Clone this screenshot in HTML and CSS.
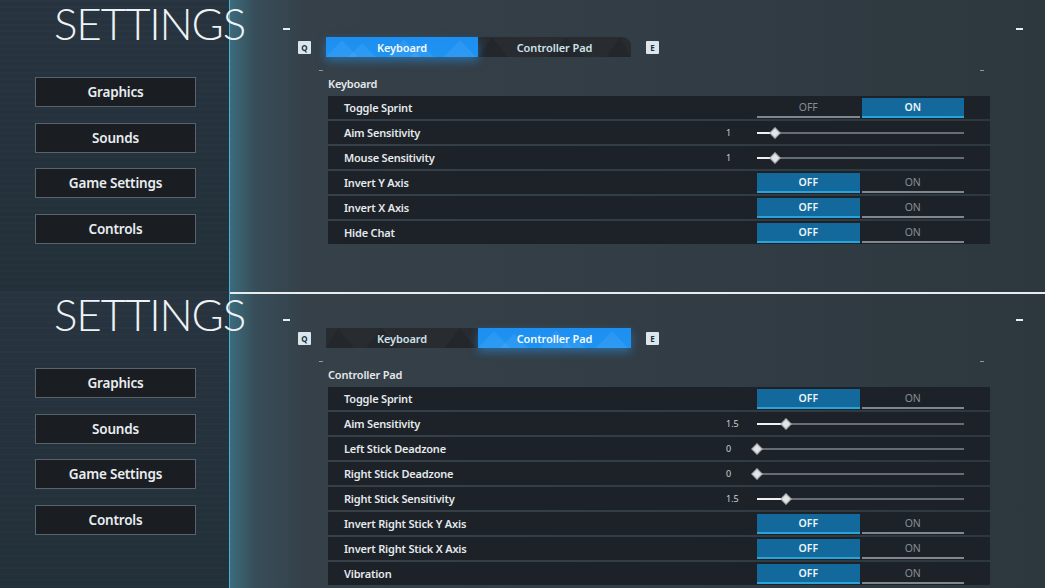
FILE: index.html
```html
<html>
    <head>
        <title>Settings</title>
        <link rel="stylesheet" href="styles.css">
    </head>
    <body>
        <!-- keyboard tab -->
        <section class="screen upper">
            <aside class="sidebar">
                <h1 class="title">SETTINGS</h1>
                <nav class="menu">
                    <div class="menu-item">Graphics</div>
                    <div class="menu-item">Sounds</div>
                    <div class="menu-item">Game Settings</div>
                    <div class="menu-item">Controls</div>
                </nav>
            </aside>
            <main class="panel">
                <div class="marks"><span class="dash"></span><span class="dash"></span></div>
                <div class="tabbar">
                    <span class="key">Q</span>
                    <div class="tabs">
                        <div class="tab active">
                            <svg class="tab-bg" viewBox="0 0 152 20" preserveAspectRatio="none"><polygon points="0,20 16,3 32,20"/><polygon points="22,20 36,6 50,20"/><polygon points="62,20 78,2 94,20"/><polygon points="84,20 96,8 108,20"/><polygon points="118,20 134,3 150,20"/></svg>
                            <span>Keyboard</span>
                        </div>
                        <div class="tab last">
                            <svg class="tab-bg" viewBox="0 0 153 20" preserveAspectRatio="none"><polygon points="0,20 14,0 30,20"/><polygon points="70,20 88,0 106,20"/><polygon points="128,20 142,0 153,20"/></svg>
                            <span>Controller Pad</span>
                        </div>
                    </div>
                    <span class="key">E</span>
                </div>
                <div class="ticks"><span></span><span></span></div>
                <h2 class="group-title">Keyboard</h2>
                <div class="rows">
                    <div class="row">
                        <span class="label">Toggle Sprint</span><span class="value"></span>
                        <div class="toggle"><span class="seg">OFF</span><span class="seg on">ON</span></div>
                    </div>
                    <div class="row">
                        <span class="label">Aim Sensitivity</span><span class="value">1</span>
                        <div class="slider"><span class="fill" style="width: 8.7%"></span><span class="thumb" style="left: 8.7%"></span></div>
                    </div>
                    <div class="row">
                        <span class="label">Mouse Sensitivity</span><span class="value">1</span>
                        <div class="slider"><span class="fill" style="width: 8.7%"></span><span class="thumb" style="left: 8.7%"></span></div>
                    </div>
                    <div class="row">
                        <span class="label">Invert Y Axis</span><span class="value"></span>
                        <div class="toggle"><span class="seg on">OFF</span><span class="seg">ON</span></div>
                    </div>
                    <div class="row">
                        <span class="label">Invert X Axis</span><span class="value"></span>
                        <div class="toggle"><span class="seg on">OFF</span><span class="seg">ON</span></div>
                    </div>
                    <div class="row">
                        <span class="label">Hide Chat</span><span class="value"></span>
                        <div class="toggle"><span class="seg on">OFF</span><span class="seg">ON</span></div>
                    </div>
                </div>
            </main>
        </section>

        <!-- controller pad tab -->
        <section class="screen lower">
            <aside class="sidebar">
                <h1 class="title">SETTINGS</h1>
                <nav class="menu">
                    <div class="menu-item">Graphics</div>
                    <div class="menu-item">Sounds</div>
                    <div class="menu-item">Game Settings</div>
                    <div class="menu-item">Controls</div>
                </nav>
            </aside>
            <main class="panel">
                <div class="marks"><span class="dash"></span><span class="dash"></span></div>
                <div class="tabbar">
                    <span class="key">Q</span>
                    <div class="tabs">
                        <div class="tab first">
                            <svg class="tab-bg" viewBox="0 0 152 20" preserveAspectRatio="none"><polygon points="0,20 12,0 28,20"/><polygon points="40,20 56,0 72,20"/><polygon points="118,20 134,0 150,20"/></svg>
                            <span>Keyboard</span>
                        </div>
                        <div class="tab active">
                            <svg class="tab-bg" viewBox="0 0 153 20" preserveAspectRatio="none"><polygon points="0,20 16,3 32,20"/><polygon points="22,20 36,6 50,20"/><polygon points="62,20 78,2 94,20"/><polygon points="84,20 96,8 108,20"/><polygon points="118,20 134,3 150,20"/></svg>
                            <span>Controller Pad</span>
                        </div>
                    </div>
                    <span class="key">E</span>
                </div>
                <div class="ticks"><span></span><span></span></div>
                <h2 class="group-title">Controller Pad</h2>
                <div class="rows">
                    <div class="row">
                        <span class="label">Toggle Sprint</span><span class="value"></span>
                        <div class="toggle"><span class="seg on">OFF</span><span class="seg">ON</span></div>
                    </div>
                    <div class="row">
                        <span class="label">Aim Sensitivity</span><span class="value">1.5</span>
                        <div class="slider"><span class="fill" style="width: 14%"></span><span class="thumb" style="left: 14%"></span></div>
                    </div>
                    <div class="row">
                        <span class="label">Left Stick Deadzone</span><span class="value">0</span>
                        <div class="slider"><span class="fill" style="width: 0%"></span><span class="thumb" style="left: 0%"></span></div>
                    </div>
                    <div class="row">
                        <span class="label">Right Stick Deadzone</span><span class="value">0</span>
                        <div class="slider"><span class="fill" style="width: 0%"></span><span class="thumb" style="left: 0%"></span></div>
                    </div>
                    <div class="row">
                        <span class="label">Right Stick Sensitivity</span><span class="value">1.5</span>
                        <div class="slider"><span class="fill" style="width: 14%"></span><span class="thumb" style="left: 14%"></span></div>
                    </div>
                    <div class="row">
                        <span class="label">Invert Right Stick Y Axis</span><span class="value"></span>
                        <div class="toggle"><span class="seg on">OFF</span><span class="seg">ON</span></div>
                    </div>
                    <div class="row">
                        <span class="label">Invert Right Stick X Axis</span><span class="value"></span>
                        <div class="toggle"><span class="seg on">OFF</span><span class="seg">ON</span></div>
                    </div>
                    <div class="row">
                        <span class="label">Vibration</span><span class="value"></span>
                        <div class="toggle"><span class="seg on">OFF</span><span class="seg">ON</span></div>
                    </div>
                </div>
            </main>
        </section>
    </body>
</html>
```

FILE: styles.css
```css
* {
    box-sizing: border-box;
    font-family: 'Noto Sans', 'Open Sans', sans-serif;
}
body {
    margin: 0;
    width: 1045px;
    height: 588px;
    overflow: hidden;
    background: #2f3940;
}
.screen {
    display: grid;
    grid-template-columns: 230px 1fr;
    overflow: hidden;
}
.screen.upper {
    height: 294px;
    border-bottom: 2px solid #e9ecee;
    position: relative;
    z-index: 1;
}
.screen.lower {
    height: 297px;
    margin-top: -3px;
}

/* left column */
.sidebar {
    background:
        repeating-linear-gradient(180deg, rgba(255,255,255,0.012) 0 2px, transparent 2px 6px),
        linear-gradient(180deg, #27343f, #22303a);
    border-right: 1px solid #4db3d4;
    padding-left: 35px;
    position: relative;
    z-index: 2;
}
.title {
    margin: 0 0 31px 19px;
    font-family: 'Lato', sans-serif;
    font-weight: 300;
    font-size: 44px;
    line-height: 46px;
    letter-spacing: -1.2px;
    color: #eef2f4;
    white-space: nowrap;
}
.menu {
    display: flex;
    flex-direction: column;
    gap: 15.5px;
}
.menu-item {
    width: 161px;
    height: 30px;
    background: #1a1e23;
    border: 1px solid #59636b;
    color: #e9edf0;
    font-size: 13.5px;
    font-weight: 600;
    letter-spacing: -0.2px;
    display: flex;
    align-items: center;
    justify-content: center;
}

/* right column */
.panel {
    background:
        linear-gradient(90deg, rgba(64,150,175,0.5), rgba(64,150,175,0.15) 25px, transparent 75px),
        linear-gradient(90deg, #36414a, #323c44 60%, #2d373e);
    padding-top: 28px;
}
.marks {
    display: flex;
    justify-content: space-between;
    margin: 0 22px 0 53px;
}
.dash {
    width: 7px;
    height: 2px;
    background: #e8ecef;
}
.tabbar {
    display: flex;
    align-items: center;
    gap: 15px;
    margin: 7px 0 0 68px;
    height: 20px;
}
.key {
    width: 13px;
    height: 13px;
    background: #dae6ed;
    border-radius: 1px;
    color: #22303a;
    font-size: 8px;
    font-weight: 700;
    display: flex;
    align-items: center;
    justify-content: center;
}
.tabs {
    display: flex;
}
.tab {
    width: 152px;
    height: 20px;
    background: #282c31;
    color: #cfe2ea;
    font-size: 11px;
    font-weight: 600;
    letter-spacing: -0.1px;
    display: flex;
    align-items: center;
    justify-content: center;
    position: relative;
}
.tab + .tab {
    width: 153px;
}
.tab.last {
    border-top-right-radius: 9px;
}
.tab-bg {
    position: absolute;
    inset: 0;
    width: 100%;
    height: 100%;
    fill: rgba(0,0,0,0.1);
}
.tab span {
    position: relative;
}
.tab.active {
    background: linear-gradient(180deg, #1c8ff0, #1f93f2);
    color: #f4f9fc;
    box-shadow: 0 4px 10px rgba(40,150,240,0.5);
    z-index: 1;
}
.tab.active .tab-bg {
    fill: rgba(120,195,255,0.16);
}
.ticks {
    display: flex;
    justify-content: space-between;
    width: 665px;
    margin: 13px 0 0 89px;
}
.ticks span {
    width: 4px;
    height: 1px;
    background: #8d979e;
}
.group-title {
    margin: 6px 0 5px 98px;
    font-size: 11px;
    line-height: 14px;
    font-weight: 600;
    letter-spacing: -0.2px;
    color: #e4e8eb;
}
.rows {
    display: flex;
    flex-direction: column;
    gap: 2px;
    width: 662px;
    margin-left: 98px;
}
.row {
    height: 23px;
    background: #1c2228;
    display: grid;
    grid-template-columns: 1fr 31px 207px;
    align-items: center;
    padding: 0 26px 0 16px;
}
.label {
    font-size: 11px;
    font-weight: 600;
    letter-spacing: -0.2px;
    color: #e5e9ec;
    white-space: nowrap;
}
.value {
    font-size: 9px;
    color: #cdd2d6;
}
.toggle {
    display: flex;
    gap: 2px;
    height: 20px;
}
.seg {
    flex: 1;
    display: flex;
    align-items: center;
    justify-content: center;
    font-size: 10.5px;
    color: #868d93;
    border-bottom: 2px solid #81878d;
}
.seg.on {
    background: #13699b;
    border-bottom-color: #2aa3d9;
    color: #eaf4f9;
    font-weight: 600;
}
.slider {
    position: relative;
    height: 2px;
    background: #666d74;
}
.fill {
    position: absolute;
    left: 0;
    top: 0;
    height: 2px;
    background: #eef0f2;
}
.thumb {
    position: absolute;
    top: 1px;
    width: 8px;
    height: 8px;
    margin: -4px 0 0 -4px;
    background: #e3e5e7;
    border: 1px solid #a7adb2;
    transform: rotate(45deg);
}
```
